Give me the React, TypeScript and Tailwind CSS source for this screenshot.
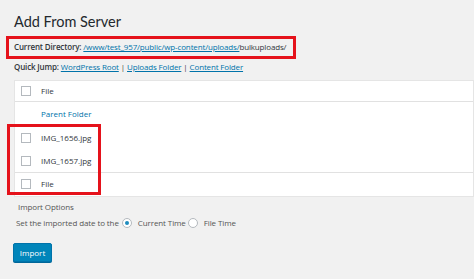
export default function App() {
  const font = { fontFamily: '"Open Sans", "Noto Sans", Arial, sans-serif' };
  return (
    <div className="h-[279px] w-[474px] overflow-hidden bg-[#f1f1f1] text-[#444]" style={font}>
      <div className="pl-[14px] pt-[12px]">
        <h1 className="font-['Lato',sans-serif] text-[14.5px] leading-[20px] text-[#23282d]">Add From Server</h1>
        <div className="-ml-[8px] mt-[1px] inline-flex h-[23px] items-center border-[3px] border-[#e5121b] pl-[5px] pr-[7px] text-[8px] tracking-[-0.15px]">
          <span className="font-semibold text-[#32373c]">Current Directory:&nbsp;</span>
          <a className="text-[#0073aa] underline">/www/test_957/public/wp-content/uploads/</a>
          <span className="text-[#32373c]">bulkuploads/</span>
        </div>
        <div className="flex items-center text-[8px] leading-[16px] tracking-[-0.15px]">
          <span className="font-semibold text-[#32373c]">Quick Jump:&nbsp;</span>
          <a className="text-[#0073aa] underline">WordPress Root</a>
          <span className="px-[2px]">|</span>
          <a className="text-[#0073aa] underline">Uploads Folder</a>
          <span className="px-[2px]">|</span>
          <a className="text-[#0073aa] underline">Content Folder</a>
        </div>
      </div>

      <div className="relative ml-[14px] mt-[5px] w-[460px] border border-[#e5e5e5] bg-white text-[8px] text-[#32373c]">
        <div className="flex h-[21px] items-center border-b border-[#e1e1e1]">
          <span className="ml-[6px] h-[10px] w-[10px] border border-[#b4b9be] bg-white" />
          <span className="ml-[10px] text-[#32373c]">File</span>
        </div>
        <div className="flex h-[25px] items-center">
          <a className="ml-[26px] text-[#0073aa]">Parent Folder</a>
        </div>
        <div className="flex h-[23px] items-center">
          <span className="ml-[6px] h-[10px] w-[10px] border border-[#b4b9be] bg-white" />
          <span className="ml-[10px]">IMG_1656.jpg</span>
        </div>
        <div className="flex h-[23px] items-center border-b border-[#e1e1e1]">
          <span className="ml-[6px] h-[10px] w-[10px] border border-[#b4b9be] bg-white" />
          <span className="ml-[10px]">IMG_1657.jpg</span>
        </div>
        <div className="flex h-[23px] items-center">
          <span className="ml-[6px] h-[10px] w-[10px] border border-[#b4b9be] bg-white" />
          <span className="ml-[10px] text-[#32373c]">File</span>
        </div>
        <div className="absolute left-[-8px] top-[43px] h-[71px] w-[94px] border-[3px] border-[#e5121b]" />
      </div>

      <div className="pl-[16px] pt-[2px] text-[8px] tracking-[-0.1px] text-[#555]">
        <div className="pl-[2px] leading-[16px]">Import Options</div>
        <div className="flex h-[16px] items-center">
          <span>Set the imported date to the</span>
          <span className="ml-[3px] flex h-[10px] w-[10px] items-center justify-center rounded-full border border-[#b4b9be] bg-white">
            <span className="h-[4px] w-[4px] rounded-full bg-[#1e8cbe]" />
          </span>
          <span className="ml-[6px]">Current Time</span>
          <span className="ml-[2px] h-[10px] w-[10px] rounded-full border border-[#b4b9be] bg-white" />
          <span className="ml-[6px]">File Time</span>
        </div>
      </div>

      <div className="pl-[13px] pt-[7px]">
        <button className="h-[19px] w-[39px] rounded-[2px] border border-[#0073aa] bg-[#0085ba] text-[8px] text-white shadow-[0_1px_0_#006799]">
          Import
        </button>
      </div>
    </div>
  );
}
